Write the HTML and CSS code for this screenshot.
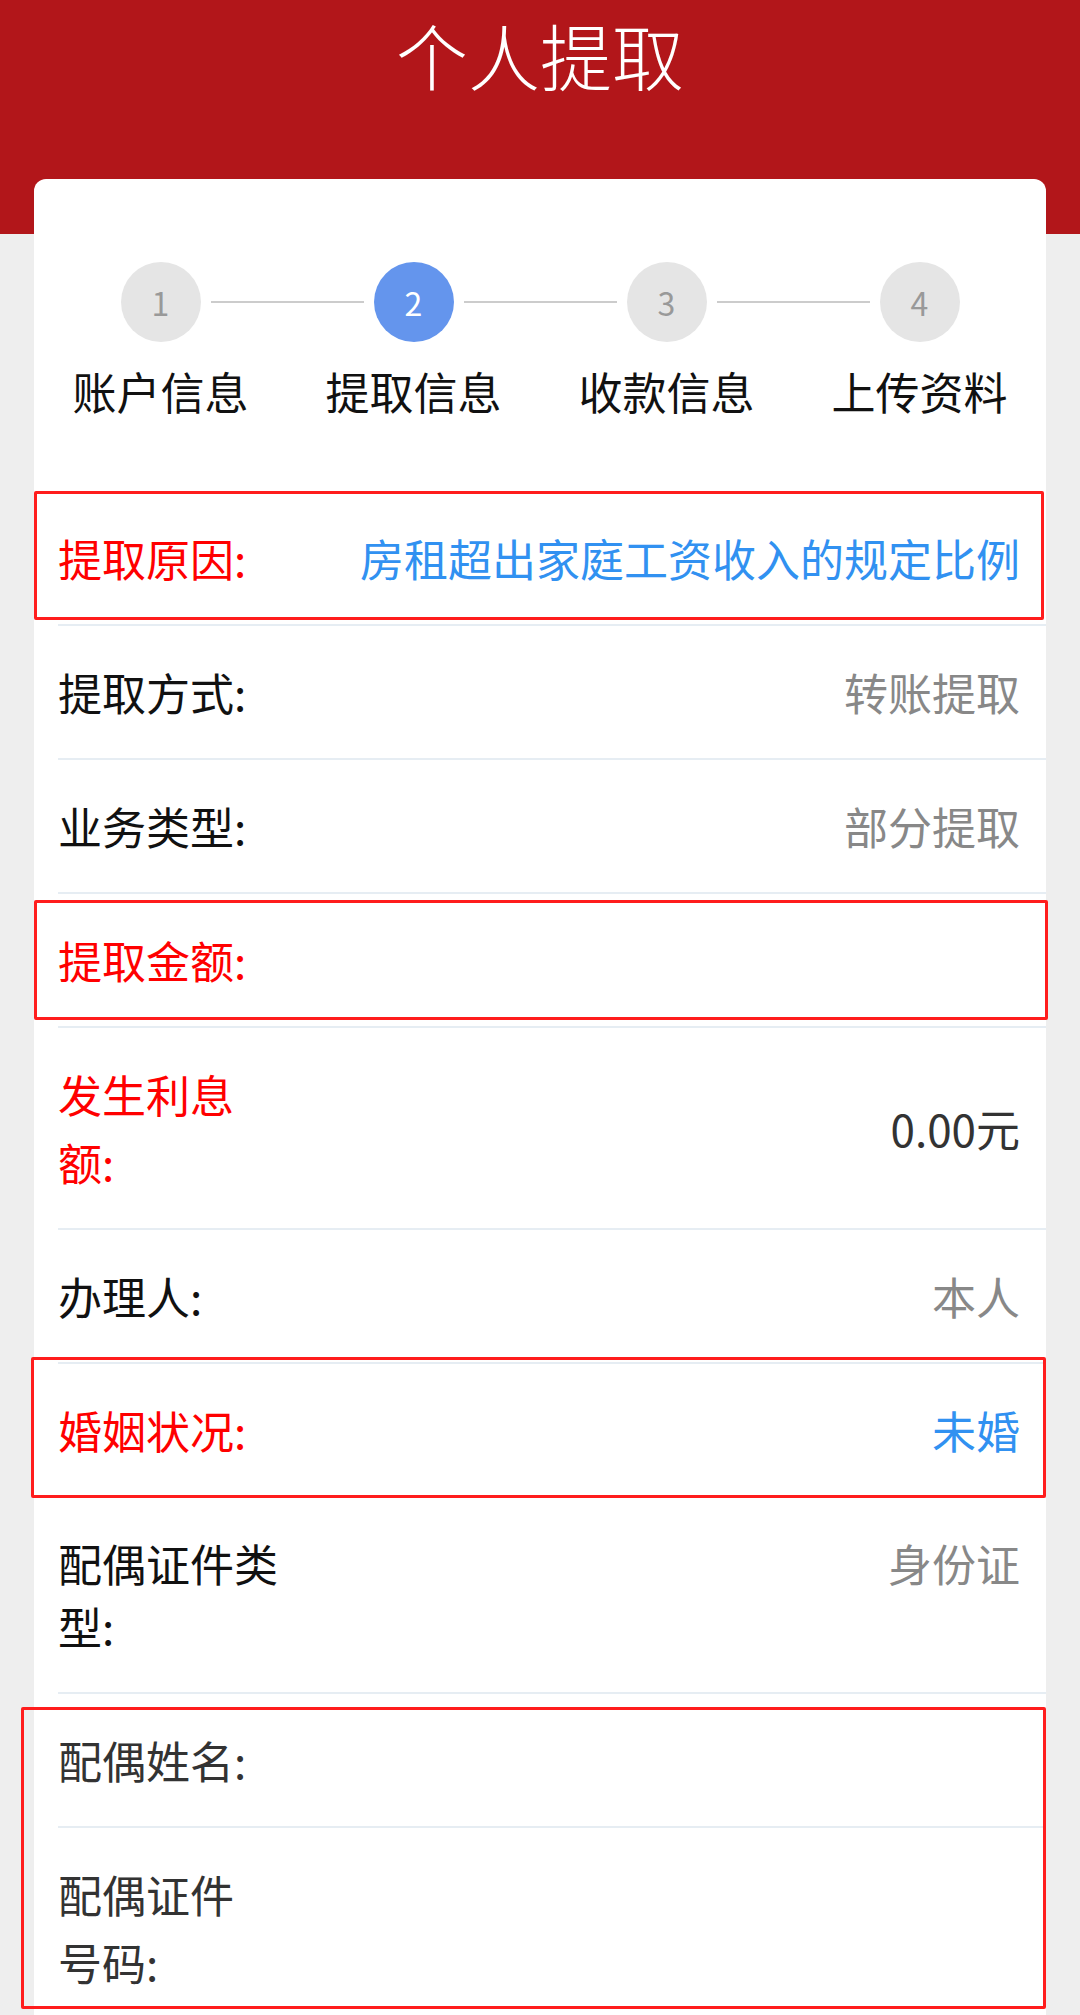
FILE: index.html
```html
<!DOCTYPE html>
<html lang="zh-CN">
<head>
    <meta charset="UTF-8">
    <meta name="viewport" content="width=device-width, initial-scale=1.0">
    <title>个人提取</title>
    <link rel="stylesheet" href="styles.css">
</head>
<body>
    <header class="topbar">
        <h1>个人提取</h1>
    </header>

    <main class="card">
        <ol class="steps">
            <li class="step">
                <div class="step-track"><span class="step-line"></span><span class="step-dot">1</span><span class="step-line"></span></div>
                <span class="step-name">账户信息</span>
            </li>
            <li class="step active">
                <div class="step-track"><span class="step-line"></span><span class="step-dot">2</span><span class="step-line"></span></div>
                <span class="step-name">提取信息</span>
            </li>
            <li class="step">
                <div class="step-track"><span class="step-line"></span><span class="step-dot">3</span><span class="step-line"></span></div>
                <span class="step-name">收款信息</span>
            </li>
            <li class="step">
                <div class="step-track"><span class="step-line"></span><span class="step-dot">4</span><span class="step-line"></span></div>
                <span class="step-name">上传资料</span>
            </li>
        </ol>

        <div class="form">
            <div class="row flag flag-reason">
                <span class="label required">提取原因:</span>
                <span class="value link">房租超出家庭工资收入的规定比例</span>
            </div>
            <div class="row">
                <span class="label">提取方式:</span>
                <span class="value muted">转账提取</span>
            </div>
            <div class="row">
                <span class="label">业务类型:</span>
                <span class="value muted">部分提取</span>
            </div>
            <div class="row flag flag-amount">
                <span class="label required">提取金额:</span>
            </div>
            <div class="row">
                <span class="label required wrap-4">发生利息额:</span>
                <span class="value">0.00元</span>
            </div>
            <div class="row">
                <span class="label">办理人:</span>
                <span class="value muted">本人</span>
            </div>
            <div class="row flag flag-marriage">
                <span class="label required">婚姻状况:</span>
                <span class="value link">未婚</span>
            </div>
            <div class="row row-top">
                <span class="label wrap-5">配偶证件类型:</span>
                <span class="value muted">身份证</span>
            </div>
            <div class="flag flag-spouse">
                <div class="row">
                    <span class="label soft">配偶姓名:</span>
                </div>
                <div class="row">
                    <span class="label soft wrap-4">配偶证件号码:</span>
                </div>
            </div>
        </div>
    </main>
</body>
</html>
```

FILE: styles.css
```css
body {
    margin: 0;
    background-color: #eeeeee;
    font-family: "Noto Sans CJK SC", "Noto Sans", sans-serif;
    color: #111;
}

.topbar {
    height: 234px;
    background-color: #b2161a;
    box-sizing: border-box;
    padding-top: 4px;
}
.topbar h1 {
    margin: 0;
    text-align: center;
    color: #fff;
    font-size: 72px;
    font-weight: 300;
    line-height: 100px;
}

.card {
    margin: -55px 34px 0;
    background-color: #fff;
    border-radius: 12px 12px 0 0;
    padding-bottom: 40px;
}

/* step indicator */
.steps {
    display: flex;
    list-style: none;
    margin: 0;
    padding: 83px 0 68px;
}
.step {
    flex: 1;
    display: flex;
    flex-direction: column;
    align-items: center;
}
.step-track {
    display: flex;
    align-items: center;
    gap: 10px;
    width: 100%;
}
.step-line {
    flex: 1;
    height: 2px;
    background-color: #cccccc;
}
.step:first-child .step-line:first-child,
.step:last-child .step-line:last-child {
    visibility: hidden;
}
.step-dot {
    width: 80px;
    height: 80px;
    border-radius: 50%;
    background-color: #e5e5e5;
    color: #999;
    font-size: 32px;
    line-height: 80px;
    text-align: center;
}
.step.active .step-dot {
    background-color: #6495ed;
    color: #fff;
}
.step-name {
    margin-top: 16px;
    font-size: 44px;
    line-height: 66px;
    color: #111;
}

/* form rows */
.row {
    display: flex;
    justify-content: space-between;
    align-items: center;
    margin-left: 24px;
    padding: 32px 26px 32px 0;
    border-bottom: 2px solid #e6edf3;
    font-size: 44px;
    line-height: 68px;
}
.row-top {
    align-items: flex-start;
    padding: 34px 26px 34px 0;
    line-height: 63px;
}
.label {
    flex: none;
    color: #111;
}
.label.required {
    color: #ff0000;
}
.label.soft {
    color: #333;
}
.wrap-4 {
    width: 200px;
}
.wrap-5 {
    width: 222px;
}
.value {
    color: #333;
    text-align: right;
}
.value.muted {
    color: #888;
}
.value.link {
    color: #3191f1;
}

/* red annotation boxes drawn over the form */
.flag {
    position: relative;
}
.flag::after {
    content: "";
    position: absolute;
    border: 3px solid #ff1d1d;
    border-radius: 2px;
    pointer-events: none;
}
.flag-reason::after {
    top: -1px;
    bottom: 4px;
    left: -24px;
    right: 2px;
}
.flag-amount::after {
    top: 6px;
    bottom: 6px;
    left: -24px;
    right: -2px;
}
.flag-marriage::after {
    top: -7px;
    bottom: -2px;
    left: -27px;
    right: 0;
}
.flag-spouse::after {
    top: 13px;
    bottom: 21px;
    left: -13px;
    right: 0;
}
```
